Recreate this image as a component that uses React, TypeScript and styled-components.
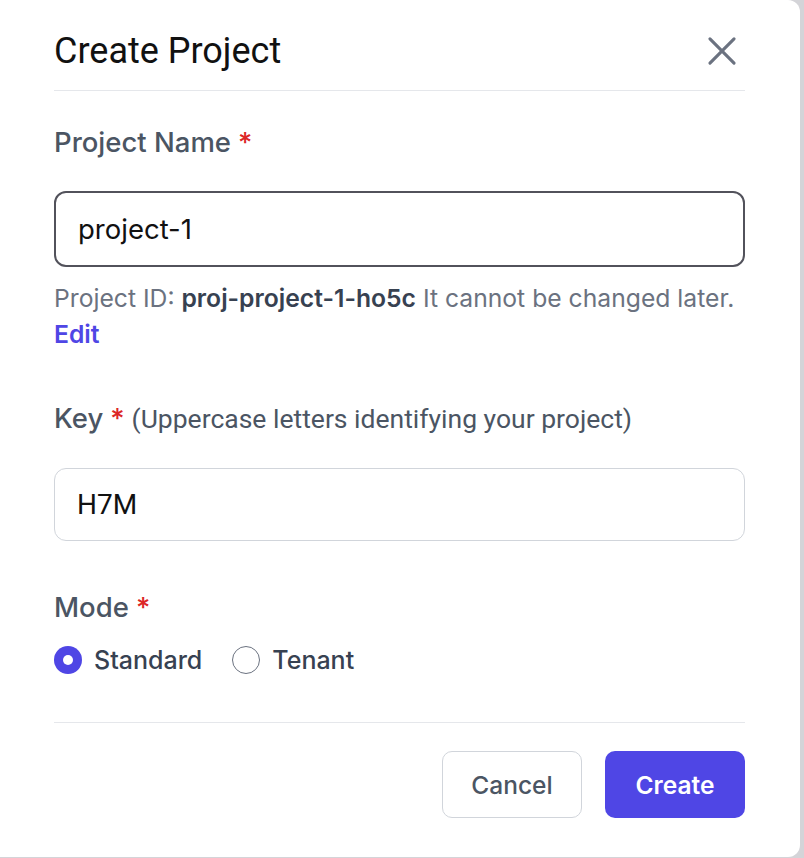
import React, { useState } from 'react';
import styled, { createGlobalStyle } from 'styled-components';

const GlobalStyle = createGlobalStyle`
  html, body {
    margin: 0;
    padding: 0;
    background: #d4d4d8;
  }
  body {
    font-family: Inter, "Noto Sans", sans-serif;
  }
`;

const Panel = styled.div`
  width: 800px;
  height: 857px;
  box-sizing: border-box;
  background: #ffffff;
  border-radius: 0 12px 12px 0;
  padding: 0 55px 0 54px;
  display: flex;
  flex-direction: column;
`;

const Header = styled.div`
  display: flex;
  align-items: center;
  justify-content: space-between;
  padding: 31px 0 19px;
  border-bottom: 1px solid #e5e7eb;
`;

const Title = styled.h2`
  margin: 0;
  font-family: Roboto, "Liberation Sans", sans-serif;
  font-size: 36px;
  line-height: 40px;
  font-weight: 400;
  color: #111111;
`;

const CloseButton = styled.button`
  width: 36px;
  height: 36px;
  padding: 0;
  margin-right: 5px;
  border: 0;
  background: transparent;
  display: flex;
  align-items: center;
  justify-content: center;
  cursor: pointer;
`;

const Field = styled.div<{ $top: number }>`
  margin-top: ${(p) => p.$top}px;
  display: flex;
  flex-direction: column;
`;

const Label = styled.label`
  font-size: 27.5px;
  line-height: 32px;
  height: 32px;
  font-weight: 500;
  color: #4b5563;
`;

const Required = styled.span`
  color: #dc2626;
  margin-left: 7px;
  line-height: 1;
`;

const Hint = styled.span`
  font-family: Roboto, "Liberation Sans", sans-serif;
  font-size: 26.5px;
  line-height: 1;
  font-weight: 400;
  color: #4b5563;
  margin-left: 7px;
`;

const Input = styled.input<{ $focused?: boolean }>`
  box-sizing: border-box;
  width: 100%;
  margin-top: ${(p) => (p.$focused ? 33 : 34)}px;
  height: ${(p) => (p.$focused ? 76 : 73)}px;
  padding: 0 22px;
  border: ${(p) => (p.$focused ? '2px solid #52525b' : '1px solid #d1d5db')};
  border-radius: 12px;
  font-family: ${(p) => (p.$focused ? 'Inter, sans-serif' : 'Roboto, "Liberation Sans", sans-serif')};
  font-size: ${(p) => (p.$focused ? 27.5 : 28)}px;
  color: #111111;
  outline: none;
  background: #fff;
`;

const Helper = styled.div`
  margin-top: 13px;
  font-size: 24.7px;
  line-height: 36px;
  color: #6b7280;

  strong {
    font-weight: 600;
    color: #374151;
  }
`;

const EditLink = styled.a`
  display: block;
  color: #4f46e5;
  font-weight: 600;
  text-decoration: none;
  cursor: pointer;
`;

const RadioRow = styled.div`
  margin-top: 21px;
  height: 32px;
  display: flex;
  align-items: center;
  gap: 30px;
`;

const RadioOption = styled.label`
  display: flex;
  align-items: center;
  gap: 12px;
  font-size: 25px;
  line-height: 32px;
  font-weight: 500;
  color: #374151;
  cursor: pointer;
`;

const RadioDot = styled.span<{ $checked: boolean }>`
  box-sizing: border-box;
  width: 28px;
  height: 28px;
  border-radius: 50%;
  background: ${(p) => (p.$checked ? '#4f46e5' : '#fff')};
  border: ${(p) => (p.$checked ? '0' : '1.5px solid #6b7280')};
  display: flex;
  align-items: center;
  justify-content: center;

  &::after {
    content: '';
    width: 10px;
    height: 10px;
    border-radius: 50%;
    background: #fff;
    display: ${(p) => (p.$checked ? 'block' : 'none')};
  }
`;

const Footer = styled.div`
  margin-top: 46px;
  border-top: 1px solid #e5e7eb;
  padding-top: 28px;
  display: flex;
  justify-content: flex-end;
  gap: 23px;
`;

const Button = styled.button<{ $primary?: boolean }>`
  box-sizing: border-box;
  width: 140px;
  height: 67px;
  border-radius: 10px;
  font-family: Inter, sans-serif;
  font-size: 24.5px;
  font-weight: ${(p) => (p.$primary ? 600 : 500)};
  color: ${(p) => (p.$primary ? '#ffffff' : '#4b5563')};
  background: ${(p) => (p.$primary ? '#4f46e5' : '#ffffff')};
  border: ${(p) => (p.$primary ? '0' : '1px solid #d1d5db')};
  cursor: pointer;
`;

const App: React.FC = () => {
  const [mode, setMode] = useState('standard');

  return (
    <>
      <GlobalStyle />
      <Panel>
        <Header>
          <Title>Create Project</Title>
          <CloseButton aria-label="Close">
            <svg width="34" height="34" viewBox="0 0 24 24" fill="none" stroke="#6b7280" strokeWidth="2.2" strokeLinecap="round">
              <path d="M3.5 3.5l17 17M20.5 3.5l-17 17" />
            </svg>
          </CloseButton>
        </Header>

        <Field $top={35}>
          <Label>
            Project Name<Required>*</Required>
          </Label>
          <Input $focused defaultValue="project-1" />
          <Helper>
            Project ID: <strong>proj-project-1-ho5c</strong> It cannot be changed later.
            <EditLink>Edit</EditLink>
          </Helper>
        </Field>

        <Field $top={50}>
          <Label>
            Key<Required>*</Required>
            <Hint>(Uppercase letters identifying your project)</Hint>
          </Label>
          <Input defaultValue="H7M" />
        </Field>

        <Field $top={50}>
          <Label>
            Mode<Required>*</Required>
          </Label>
          <RadioRow>
            <RadioOption onClick={() => setMode('standard')}>
              <RadioDot $checked={mode === 'standard'} />
              Standard
            </RadioOption>
            <RadioOption onClick={() => setMode('tenant')}>
              <RadioDot $checked={mode === 'tenant'} />
              Tenant
            </RadioOption>
          </RadioRow>
        </Field>

        <Footer>
          <Button>Cancel</Button>
          <Button $primary>Create</Button>
        </Footer>
      </Panel>
    </>
  );
};

export default App;
